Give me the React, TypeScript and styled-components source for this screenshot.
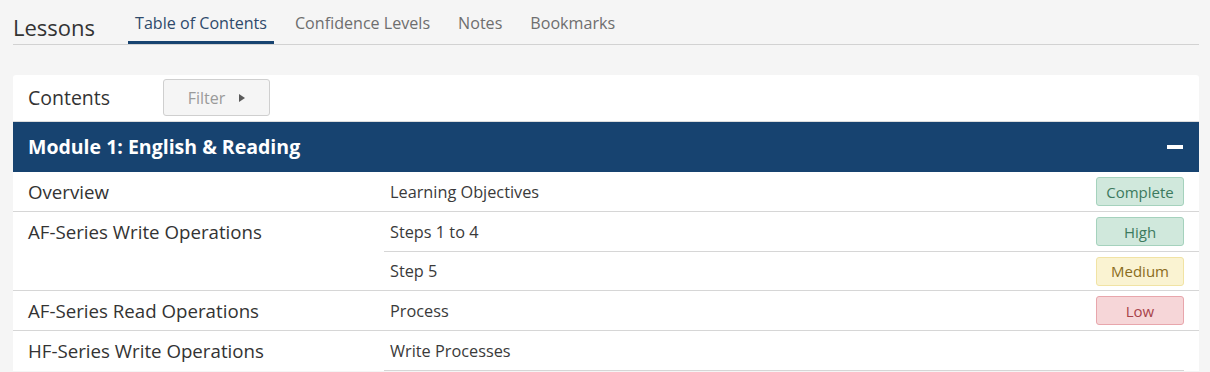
import React from "react";
import styled, { createGlobalStyle } from "styled-components";

const Global = createGlobalStyle`
  html, body { margin: 0; padding: 0; background: #f5f5f5; }
  body { font-family: "Open Sans", "Liberation Sans", sans-serif; color: #333; }
  * { box-sizing: border-box; }
`;

const Page = styled.div`
  padding: 0 11px 0 13px;
`;

const TopBar = styled.div`
  display: flex;
  align-items: flex-start;
  height: 45px;
  border-bottom: 1px solid #d2d2d2;
`;

const Title = styled.h1`
  margin: 12px 0 0 0;
  font-size: 22px;
  line-height: 30px;
  font-weight: 400;
  color: #333;
`;

const Tabs = styled.nav`
  display: flex;
  margin-left: 33px;
  gap: 14px;
`;

const Tab = styled.a<{ $active?: boolean }>`
  margin-top: 12px;
  padding: 0 7px 7px;
  font-size: 16.1px;
  line-height: 22px;
  color: ${(p) => (p.$active ? "#2f4a6b" : "#6e6e6e")};
  border-bottom: 3px solid ${(p) => (p.$active ? "#174370" : "transparent")};
  cursor: pointer;
`;

const Panel = styled.section`
  margin-top: 30px;
  background: #fff;
  border-radius: 3px 3px 0 0;
`;

const PanelHead = styled.div`
  display: flex;
  align-items: center;
  height: 47px;
  padding-bottom: 1px;
  border-bottom: 1px solid #dcdcdc;
`;

const HeadLabel = styled.div`
  width: 150px;
  padding-left: 15px;
  font-size: 19.5px;
  color: #333;
`;

const FilterButton = styled.button`
  display: flex;
  align-items: center;
  justify-content: center;
  gap: 14px;
  width: 107px;
  height: 37px;
  padding: 0;
  background: #f5f5f5;
  border: 1px solid #cfcfcf;
  border-radius: 3px;
  font-family: inherit;
  font-size: 16px;
  color: #9a9a9a;
`;

const Caret = styled.span`
  width: 0;
  height: 0;
  border-top: 4.5px solid transparent;
  border-bottom: 4.5px solid transparent;
  border-left: 6px solid #5a5a5a;
  margin-top: 1px;
`;

const ModuleBar = styled.div`
  display: flex;
  align-items: center;
  justify-content: space-between;
  height: 50px;
  padding: 0 16px 2px 15px;
  background: #174370;
  color: #fff;
  font-size: 19.5px;
  font-weight: 700;
`;

const Minus = styled.span`
  width: 16px;
  height: 4px;
  margin-top: 2px;
  background: #fff;
`;

const Group = styled.div<{ $open?: boolean }>`
  display: flex;
  border-bottom: ${(p) => (p.$open ? "none" : "1px solid #d6d6d6")};
`;

const GroupTitle = styled.div`
  width: 371px;
  flex: none;
  padding: 8px 15px 0;
  font-size: 18.7px;
  line-height: 24px;
  color: #333;
`;

const Items = styled.div<{ $inset?: boolean }>`
  flex: 1;
  display: flex;
  flex-direction: column;
  margin-right: ${(p) => (p.$inset ? "15px" : "0")};
  border-bottom: ${(p) => (p.$inset ? "1px solid #d6d6d6" : "none")};
`;

const Item = styled.div<{ $ruled?: boolean }>`
  display: flex;
  align-items: center;
  justify-content: space-between;
  height: 39px;
  padding: 0 15px 0 6px;
  border-top: ${(p) => (p.$ruled ? "1px solid #d6d6d6" : "none")};
  font-size: 16.3px;
  color: #3a3a3a;
`;

const tones = {
  complete: { bg: "#d0e8dc", border: "#a5d2bd", fg: "#3c7a5e" },
  high: { bg: "#d0e8dc", border: "#a5d2bd", fg: "#3c7a5e" },
  medium: { bg: "#faf3d2", border: "#f1e3a4", fg: "#8a6c1c" },
  low: { bg: "#f6d6d8", border: "#e8a6ac", fg: "#a8434a" },
};

type Tone = keyof typeof tones;

const Badge = styled.span<{ $tone: Tone }>`
  display: flex;
  align-items: center;
  justify-content: center;
  width: 88px;
  height: 29px;
  border-radius: 3px;
  font-size: 15px;
  background: ${(p) => tones[p.$tone].bg};
  border: 1px solid ${(p) => tones[p.$tone].border};
  color: ${(p) => tones[p.$tone].fg};
`;

type Entry = { label: string; badge?: { text: string; tone: Tone } };
type Section = { title: string; items: Entry[]; open?: boolean };

const sections: Section[] = [
  { title: "Overview", items: [{ label: "Learning Objectives", badge: { text: "Complete", tone: "complete" } }] },
  {
    title: "AF-Series Write Operations",
    items: [
      { label: "Steps 1 to 4", badge: { text: "High", tone: "high" } },
      { label: "Step 5", badge: { text: "Medium", tone: "medium" } },
    ],
  },
  { title: "AF-Series Read Operations", items: [{ label: "Process", badge: { text: "Low", tone: "low" } }] },
  { title: "HF-Series Write Operations", open: true, items: [{ label: "Write Processes" }] },
];

export default function App() {
  return (
    <Page>
      <Global />
      <TopBar>
        <Title>Lessons</Title>
        <Tabs>
          <Tab $active>Table of Contents</Tab>
          <Tab>Confidence Levels</Tab>
          <Tab>Notes</Tab>
          <Tab>Bookmarks</Tab>
        </Tabs>
      </TopBar>
      <Panel>
        <PanelHead>
          <HeadLabel>Contents</HeadLabel>
          <FilterButton>
            Filter
            <Caret />
          </FilterButton>
        </PanelHead>
        <ModuleBar>
          Module 1: English &amp; Reading
          <Minus />
        </ModuleBar>
        {sections.map((s) => (
          <Group key={s.title} $open={s.open}>
            <GroupTitle>{s.title}</GroupTitle>
            <Items $inset={s.open}>
              {s.items.map((it, i) => (
                <Item key={it.label} $ruled={i > 0}>
                  {it.label}
                  {it.badge && <Badge $tone={it.badge.tone}>{it.badge.text}</Badge>}
                </Item>
              ))}
            </Items>
          </Group>
        ))}
      </Panel>
    </Page>
  );
}
